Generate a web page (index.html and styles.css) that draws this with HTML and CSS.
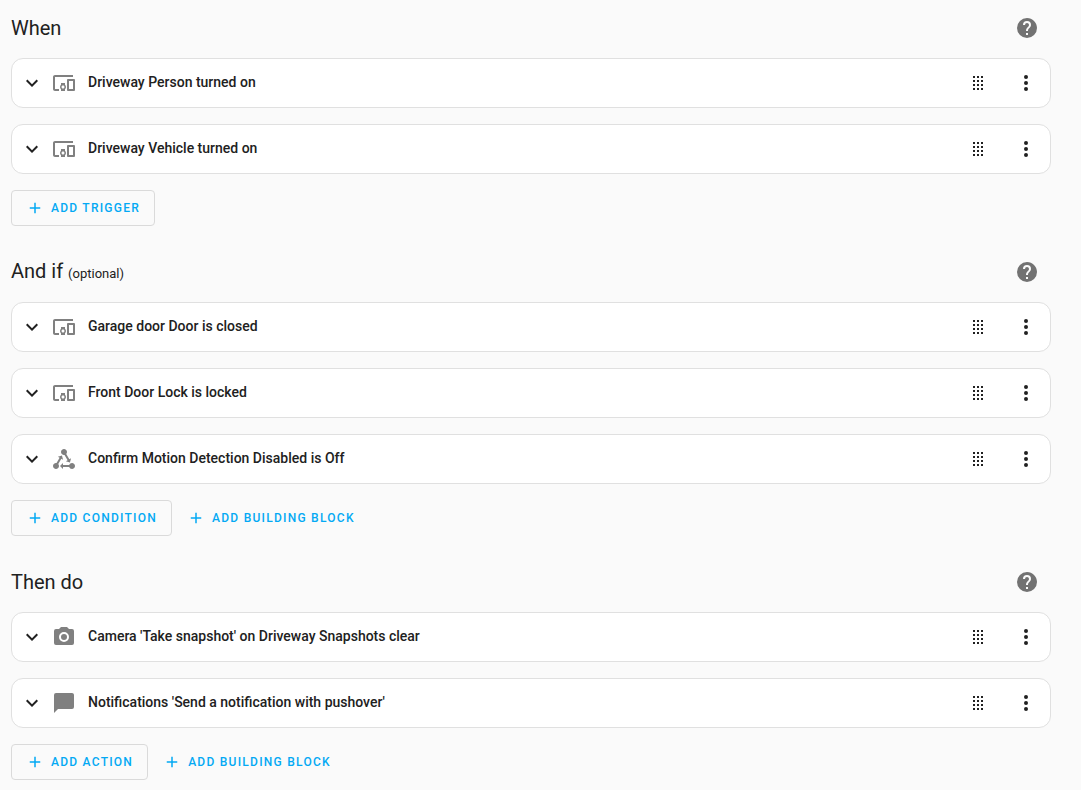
FILE: index.html
```html
<!DOCTYPE html>
<html lang="en">
<head>
    <meta charset="UTF-8">
    <meta name="viewport" content="width=device-width, initial-scale=1.0">
    <title>Automation editor</title>
    <link rel="stylesheet" href="styles.css">
</head>
<body>
    <!-- shared icons -->
    <svg class="sprite" aria-hidden="true">
        <symbol id="chevron" viewBox="0 0 24 24"><path d="M7.41,8.58L12,13.17L16.59,8.58L18,10L12,16L6,10L7.41,8.58Z"/></symbol>
        <symbol id="help" viewBox="0 0 24 24"><path d="M15.07,11.25L14.17,12.17C13.45,12.89 13,13.5 13,15H11V14.5C11,13.39 11.45,12.39 12.17,11.67L13.41,10.41C13.78,10.05 14,9.55 14,9C14,7.89 13.1,7 12,7A2,2 0 0,0 10,9H8A4,4 0 0,1 12,5A4,4 0 0,1 16,9C16,9.88 15.64,10.67 15.07,11.25M13,19H11V17H13M12,2A10,10 0 0,0 2,12A10,10 0 0,0 12,22A10,10 0 0,0 22,12C22,6.47 17.5,2 12,2Z"/></symbol>
        <symbol id="devices" viewBox="0 0 24 24"><path d="M3 6H21V4H3C1.9 4 1 4.9 1 6V18C1 19.1 1.9 20 3 20H7V18H3V6M13 12H9V13.78C8.39 14.33 8 15.11 8 16C8 16.89 8.39 17.67 9 18.22V20H13V18.22C13.61 17.67 14 16.88 14 16S13.61 14.33 13 13.78V12M11 17.5C10.17 17.5 9.5 16.83 9.5 16S10.17 14.5 11 14.5 12.5 15.17 12.5 16 11.83 17.5 11 17.5M22 8H16C15.5 8 15 8.5 15 9V19C15 19.5 15.5 20 16 20H22C22.5 20 23 19.5 23 19V9C23 8.5 22.5 8 22 8M21 18H17V10H21V18Z"/></symbol>
        <symbol id="state" viewBox="0 0 24 24"><path d="M6.27 17.05C6.72 17.58 7 18.25 7 19C7 20.66 5.66 22 4 22S1 20.66 1 19 2.34 16 4 16C4.18 16 4.36 16 4.53 16.05L7.6 10.69L5.86 9.7L9.95 8.58L11.07 12.67L9.33 11.68L6.27 17.05M20 16C18.7 16 17.6 16.84 17.18 18H11V16L8 19L11 22V20H17.18C17.6 21.16 18.7 22 20 22C21.66 22 23 20.66 23 19S21.66 16 20 16M12 8C12.18 8 12.36 8 12.53 7.95L15.6 13.31L13.86 14.3L17.95 15.42L19.07 11.33L17.33 12.32L14.27 6.95C14.72 6.42 15 5.75 15 5C15 3.34 13.66 2 12 2S9 3.34 9 5 10.34 8 12 8Z"/></symbol>
        <symbol id="camera" viewBox="0 0 24 24"><path d="M4,4H7L9,2H15L17,4H20A2,2 0 0,1 22,6V18A2,2 0 0,1 20,20H4A2,2 0 0,1 2,18V6A2,2 0 0,1 4,4M12,7A5,5 0 0,0 7,12A5,5 0 0,0 12,17A5,5 0 0,0 17,12A5,5 0 0,0 12,7M12,9A3,3 0 0,1 15,12A3,3 0 0,1 12,15A3,3 0 0,1 9,12A3,3 0 0,1 12,9Z"/></symbol>
        <symbol id="message" viewBox="0 0 24 24"><path d="M20,2H4A2,2 0 0,0 2,4V22L6,18H20A2,2 0 0,0 22,16V4C22,2.89 21.1,2 20,2Z"/></symbol>
        <symbol id="drag" viewBox="0 0 24 24"><path d="M7,19V17H9V19H7M11,19V17H13V19H11M15,19V17H17V19H15M7,15V13H9V15H7M11,15V13H13V15H11M15,15V13H17V15H15M7,11V9H9V11H7M11,11V9H13V11H11M15,11V9H17V11H15M7,7V5H9V7H7M11,7V5H13V7H11M15,7V5H17V7H15Z"/></symbol>
        <symbol id="dots" viewBox="0 0 24 24"><path d="M12,16A2,2 0 0,1 14,18A2,2 0 0,1 12,20A2,2 0 0,1 10,18A2,2 0 0,1 12,16M12,10A2,2 0 0,1 14,12A2,2 0 0,1 12,14A2,2 0 0,1 10,12A2,2 0 0,1 12,10M12,4A2,2 0 0,1 14,6A2,2 0 0,1 12,8A2,2 0 0,1 10,6A2,2 0 0,1 12,4Z"/></symbol>
        <symbol id="plus" viewBox="0 0 24 24"><path d="M19,13H13V19H11V13H5V11H11V5H13V11H19V13Z"/></symbol>
    </svg>

    <main class="editor">
        <section class="section">
            <div class="header">
                <h2>When</h2>
                <button class="icon-button help" aria-label="Help"><svg class="icon"><use href="#help"/></svg></button>
            </div>
            <div class="rows">
                <div class="card">
                    <button class="expand" aria-label="Expand"><svg class="icon"><use href="#chevron"/></svg></button>
                    <svg class="icon type"><use href="#devices"/></svg>
                    <h3>Driveway Person turned on</h3>
                    <button class="icon-button" aria-label="Move"><svg class="icon"><use href="#drag"/></svg></button>
                    <button class="icon-button" aria-label="Menu"><svg class="icon"><use href="#dots"/></svg></button>
                </div>
                <div class="card">
                    <button class="expand" aria-label="Expand"><svg class="icon"><use href="#chevron"/></svg></button>
                    <svg class="icon type"><use href="#devices"/></svg>
                    <h3>Driveway Vehicle turned on</h3>
                    <button class="icon-button" aria-label="Move"><svg class="icon"><use href="#drag"/></svg></button>
                    <button class="icon-button" aria-label="Menu"><svg class="icon"><use href="#dots"/></svg></button>
                </div>
                <div class="buttons">
                    <button class="add outlined"><svg><use href="#plus"/></svg>Add trigger</button>
                </div>
            </div>
        </section>

        <section class="section">
            <div class="header">
                <h2>And if <small>(optional)</small></h2>
                <button class="icon-button help" aria-label="Help"><svg class="icon"><use href="#help"/></svg></button>
            </div>
            <div class="rows">
                <div class="card">
                    <button class="expand" aria-label="Expand"><svg class="icon"><use href="#chevron"/></svg></button>
                    <svg class="icon type"><use href="#devices"/></svg>
                    <h3>Garage door Door is closed</h3>
                    <button class="icon-button" aria-label="Move"><svg class="icon"><use href="#drag"/></svg></button>
                    <button class="icon-button" aria-label="Menu"><svg class="icon"><use href="#dots"/></svg></button>
                </div>
                <div class="card">
                    <button class="expand" aria-label="Expand"><svg class="icon"><use href="#chevron"/></svg></button>
                    <svg class="icon type"><use href="#devices"/></svg>
                    <h3>Front Door Lock is locked</h3>
                    <button class="icon-button" aria-label="Move"><svg class="icon"><use href="#drag"/></svg></button>
                    <button class="icon-button" aria-label="Menu"><svg class="icon"><use href="#dots"/></svg></button>
                </div>
                <div class="card">
                    <button class="expand" aria-label="Expand"><svg class="icon"><use href="#chevron"/></svg></button>
                    <svg class="icon type"><use href="#state"/></svg>
                    <h3>Confirm Motion Detection Disabled is Off</h3>
                    <button class="icon-button" aria-label="Move"><svg class="icon"><use href="#drag"/></svg></button>
                    <button class="icon-button" aria-label="Menu"><svg class="icon"><use href="#dots"/></svg></button>
                </div>
                <div class="buttons">
                    <button class="add outlined"><svg><use href="#plus"/></svg>Add condition</button>
                    <button class="add"><svg><use href="#plus"/></svg>Add building block</button>
                </div>
            </div>
        </section>

        <section class="section">
            <div class="header">
                <h2>Then do</h2>
                <button class="icon-button help" aria-label="Help"><svg class="icon"><use href="#help"/></svg></button>
            </div>
            <div class="rows">
                <div class="card">
                    <button class="expand" aria-label="Expand"><svg class="icon"><use href="#chevron"/></svg></button>
                    <svg class="icon type"><use href="#camera"/></svg>
                    <h3>Camera 'Take snapshot' on Driveway Snapshots clear</h3>
                    <button class="icon-button" aria-label="Move"><svg class="icon"><use href="#drag"/></svg></button>
                    <button class="icon-button" aria-label="Menu"><svg class="icon"><use href="#dots"/></svg></button>
                </div>
                <div class="card">
                    <button class="expand" aria-label="Expand"><svg class="icon"><use href="#chevron"/></svg></button>
                    <svg class="icon type"><use href="#message"/></svg>
                    <h3>Notifications 'Send a notification with pushover'</h3>
                    <button class="icon-button" aria-label="Move"><svg class="icon"><use href="#drag"/></svg></button>
                    <button class="icon-button" aria-label="Menu"><svg class="icon"><use href="#dots"/></svg></button>
                </div>
                <div class="buttons">
                    <button class="add outlined"><svg><use href="#plus"/></svg>Add action</button>
                    <button class="add"><svg><use href="#plus"/></svg>Add building block</button>
                </div>
            </div>
        </section>
    </main>
</body>
</html>
```
FILE: styles.css
```css
* {
    box-sizing: border-box;
}
body {
    margin: 0;
    background: #fafafa;
    color: #212121;
    font-family: Roboto, sans-serif;
    font-size: 14px;
}
button {
    border: none;
    padding: 0;
    background: none;
    color: inherit;
    font-family: inherit;
    cursor: pointer;
}
svg {
    display: block;
    fill: currentColor;
}
.sprite {
    display: none;
}
.editor {
    display: flex;
    flex-direction: column;
    gap: 22px;
    padding: 4px 30px 8px 11px;
}
.header {
    display: flex;
    align-items: center;
    justify-content: space-between;
    margin-bottom: 6px;
}
h2 {
    margin: 0;
    font-size: 20px;
    font-weight: 400;
    line-height: 28px;
}
h2 small {
    font-size: 13px;
}
.rows {
    display: flex;
    flex-direction: column;
    gap: 16px;
}
.card {
    display: flex;
    align-items: center;
    padding-left: 8px;
    background: #fff;
    border: 1px solid #e0e0e0;
    border-radius: 12px;
}
.icon {
    width: 24px;
    height: 24px;
    flex: none;
}
.type {
    margin: 0 12px 0 8px;
    color: #808080;
}
h3 {
    flex: 1;
    margin: 0;
    padding-bottom: 3px;
    font-size: 14px;
    font-weight: 500;
    line-height: 20px;
}
.icon-button {
    display: flex;
    align-items: center;
    justify-content: center;
    width: 48px;
    height: 48px;
}
.help {
    color: #727272;
}
.buttons {
    display: flex;
    gap: 7px;
}
.add {
    display: flex;
    align-items: center;
    gap: 7px;
    height: 36px;
    padding: 0 8px;
    border-radius: 4px;
    color: #03a9f4;
    font-size: 12px;
    font-weight: 500;
    letter-spacing: 1.25px;
    text-transform: uppercase;
}
.add svg {
    width: 18px;
    height: 18px;
}
.outlined {
    padding: 0 14px;
    border: 1px solid #dadada;
}
```
